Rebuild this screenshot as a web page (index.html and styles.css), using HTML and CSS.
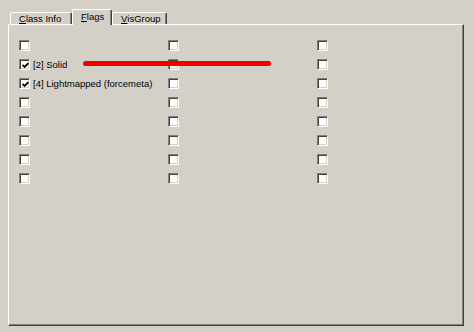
FILE: index.html
```html
<!DOCTYPE html>
<html>
<head>
<meta charset="utf-8">
<link rel="stylesheet" href="styles.css">
</head>
<body>
<div class="dialog">
  <div class="tabs">
    <div class="tab tab-class"><span class="u">C</span>lass Info</div>
    <div class="tab tab-flags active"><span class="u">F</span>lags</div>
    <div class="tab tab-vis"><span class="u">V</span>isGroup</div>
  </div>
  <div class="panel">
    <div class="grid">
      <label class="item"><span class="cb"></span></label>
      <label class="item"><span class="cb"></span></label>
      <label class="item"><span class="cb"></span></label>

      <label class="item"><span class="cb checked"><svg viewBox="0 0 7 7" width="7" height="7"><polyline points="0.6,3 2.6,5 6.4,1.2" fill="none" stroke="#000" stroke-width="1.8"/></svg></span><span class="lbl">[2] Solid</span></label>
      <label class="item"><span class="cb"></span></label>
      <label class="item"><span class="cb"></span></label>

      <label class="item"><span class="cb checked"><svg viewBox="0 0 7 7" width="7" height="7"><polyline points="0.6,3 2.6,5 6.4,1.2" fill="none" stroke="#000" stroke-width="1.8"/></svg></span><span class="lbl">[4] Lightmapped (forcemeta)</span></label>
      <label class="item"><span class="cb"></span></label>
      <label class="item"><span class="cb"></span></label>

      <label class="item"><span class="cb"></span></label>
      <label class="item"><span class="cb"></span></label>
      <label class="item"><span class="cb"></span></label>

      <label class="item"><span class="cb"></span></label>
      <label class="item"><span class="cb"></span></label>
      <label class="item"><span class="cb"></span></label>

      <label class="item"><span class="cb"></span></label>
      <label class="item"><span class="cb"></span></label>
      <label class="item"><span class="cb"></span></label>

      <label class="item"><span class="cb"></span></label>
      <label class="item"><span class="cb"></span></label>
      <label class="item"><span class="cb"></span></label>

      <label class="item"><span class="cb"></span></label>
      <label class="item"><span class="cb"></span></label>
      <label class="item"><span class="cb"></span></label>
    </div>
  </div>
  <div class="annotation"></div>
</div>
</body>
</html>
```

FILE: styles.css
```css
html, body {
  margin: 0;
  padding: 0;
  background: #d4d0c8;
}

body {
  width: 474px;
  height: 332px;
  overflow: hidden;
  font-family: "Liberation Sans", Arial, sans-serif;
  font-size: 9.5px;
  color: #000;
}

.dialog {
  position: relative;
  padding-left: 8px;
}

.tabs {
  display: flex;
  align-items: flex-end;
  height: 24px;
  padding-left: 2px;
  position: relative;
  z-index: 2;
}

.tab {
  box-sizing: border-box;
  height: 12px;
  background: #d4d0c8;
  border-top: 1px solid #ffffff;
  border-left: 1px solid #ffffff;
  border-right: 1px solid #404040;
  box-shadow: inset -1px 0 0 #808080;
  border-radius: 2px 2px 0 0;
  display: flex;
  align-items: center;
  padding-left: 8px;
  line-height: 10px;
  white-space: nowrap;
}

.tab-class { width: 62px; }
.tab-flags { width: 40px; }
.tab-vis { width: 55px; }

.tab.active {
  height: 16px;
  margin-bottom: -1px;
  padding-left: 8px;
  padding-bottom: 1px;
}

.u {
  text-decoration: underline;
  text-underline-offset: 1px;
}

.panel {
  box-sizing: border-box;
  width: 456px;
  height: 302px;
  border-top: 1px solid #ffffff;
  border-left: 1px solid #ffffff;
  border-right: 1px solid #404040;
  border-bottom: 1px solid #404040;
  box-shadow: inset -1px -1px 0 #808080;
  padding: 15px 0 0 10px;
}

.grid {
  display: grid;
  grid-template-columns: 149px 149px 149px;
  grid-auto-rows: 11px;
  row-gap: 8px;
}

.item {
  display: flex;
  align-items: center;
  gap: 3px;
  height: 11px;
}

.cb {
  box-sizing: border-box;
  width: 11px;
  height: 11px;
  flex: none;
  background: #ffffff;
  border-top: 1px solid #808080;
  border-left: 1px solid #808080;
  border-right: 1px solid #ffffff;
  border-bottom: 1px solid #ffffff;
  box-shadow: inset 1px 1px 0 #404040, inset -1px -1px 0 #d4d0c8;
  display: flex;
  align-items: center;
  justify-content: center;
}

.cb svg {
  display: block;
  margin: 1px 0 0 1px;
}

.lbl {
  line-height: 11px;
  white-space: nowrap;
}

.annotation {
  position: absolute;
  left: 83px;
  top: 61px;
  width: 188px;
  height: 5px;
  border-radius: 3px;
  background: #f20000;
  z-index: 3;
}
```
